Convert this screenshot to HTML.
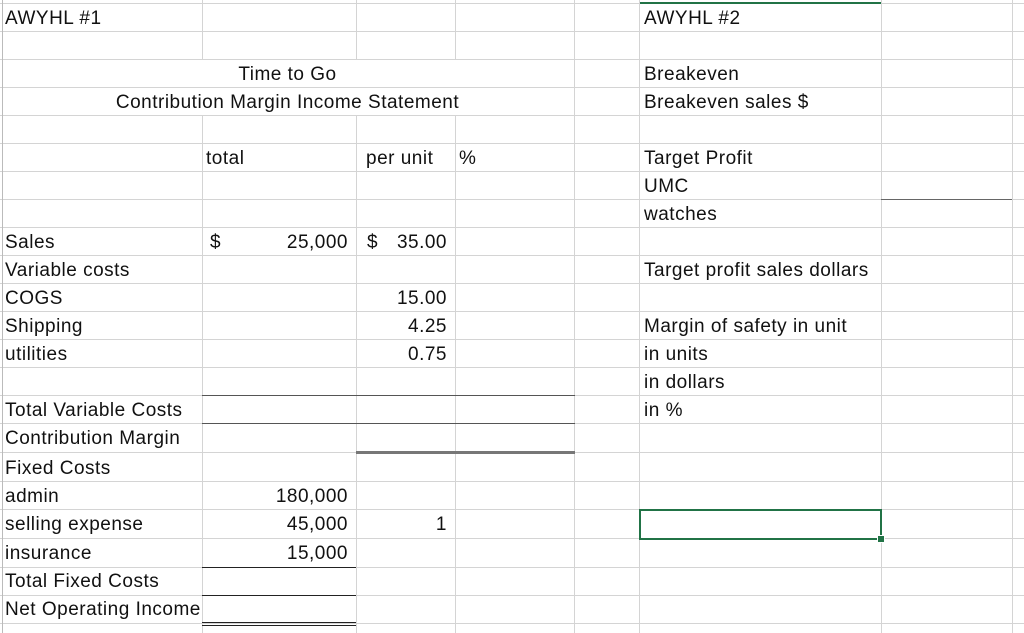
<!DOCTYPE html>
<html><head><meta charset="utf-8"><style>
body{margin:0;width:1024px;height:633px;overflow:hidden;background:#fff;position:relative;font-family:"Liberation Sans",Arial,sans-serif;}
.h{position:absolute;height:1px;background:#d4d4d4;left:0;width:1024px}
.v{position:absolute;width:1px;background:#d4d4d4}
.b{position:absolute;height:1px;background:#222}
.t{position:absolute;font-size:19px;line-height:30px;height:28px;white-space:nowrap;color:#111;letter-spacing:0.5px}
.r{text-align:right}
</style></head><body>
<div class="h" style="top:3px"></div><div class="h" style="top:31px"></div><div class="h" style="top:59px"></div><div class="h" style="top:87px"></div><div class="h" style="top:115px"></div><div class="h" style="top:143px"></div><div class="h" style="top:171px"></div><div class="h" style="top:199px"></div><div class="h" style="top:227px"></div><div class="h" style="top:255px"></div><div class="h" style="top:283px"></div><div class="h" style="top:311px"></div><div class="h" style="top:339px"></div><div class="h" style="top:367px"></div><div class="h" style="top:395px"></div><div class="h" style="top:423px"></div><div class="h" style="top:452px"></div><div class="h" style="top:481px"></div><div class="h" style="top:509px"></div><div class="h" style="top:538px"></div><div class="h" style="top:567px"></div><div class="h" style="top:595px"></div><div class="h" style="top:623px"></div>
<div class="v" style="left:2px;top:0;height:633px;background:#bbb"></div>
<div class="v" style="left:202px;top:0;height:59px"></div><div class="v" style="left:202px;top:115px;height:518px"></div>
<div class="v" style="left:356px;top:0;height:59px"></div><div class="v" style="left:356px;top:115px;height:518px"></div>
<div class="v" style="left:455px;top:0;height:59px"></div><div class="v" style="left:455px;top:115px;height:518px"></div>
<div class="v" style="left:574px;top:0;height:633px"></div>
<div class="v" style="left:639px;top:0;height:633px"></div>
<div class="v" style="left:881px;top:0;height:633px"></div>
<div class="v" style="left:1012px;top:0;height:633px"></div>
<div class="b" style="left:202px;width:373px;top:395px;background:#555"></div>
<div class="b" style="left:202px;width:373px;top:423px;background:#555"></div>
<div class="b" style="left:356px;width:219px;top:451px;height:3px;background:#777"></div>
<div class="b" style="left:202px;width:154px;top:567px"></div>
<div class="b" style="left:202px;width:154px;top:595px"></div>
<div class="b" style="left:202px;width:154px;top:622px"></div>
<div class="b" style="left:202px;width:154px;top:625px"></div>
<div class="b" style="left:881px;width:131px;top:199px;background:#666"></div>
<div class="b" style="left:640px;width:241px;top:2px;height:2px;background:#217346"></div>
<div style="position:absolute;left:639px;top:509px;width:239px;height:27px;border:2px solid #217346"></div>
<div style="position:absolute;left:877px;top:535px;width:6px;height:6px;background:#217346;border:1px solid #fff"></div>
<div class="t" style="left:5px;top:4px">AWYHL #1</div>
<div class="t" style="left:644px;top:4px">AWYHL #2</div>
<div class="t" style="left:0;width:575px;text-align:center;top:60px">Time to Go</div>
<div class="t" style="left:0;width:575px;text-align:center;top:88px">Contribution Margin Income Statement</div>
<div class="t" style="left:644px;top:60px">Breakeven</div>
<div class="t" style="left:644px;top:88px">Breakeven sales $</div>
<div class="t" style="left:206px;top:144px">total</div>
<div class="t" style="left:366px;top:144px">per unit</div>
<div class="t" style="left:459px;top:144px">%</div>
<div class="t" style="left:644px;top:144px">Target Profit</div>
<div class="t" style="left:644px;top:172px">UMC</div>
<div class="t" style="left:644px;top:200px">watches</div>
<div class="t" style="left:5px;top:228px">Sales</div>
<div class="t" style="left:210px;top:228px">$</div>
<div class="t r" style="left:202px;width:146px;top:228px">25,000</div>
<div class="t" style="left:367px;top:228px">$</div>
<div class="t r" style="left:356px;width:91px;top:228px">35.00</div>
<div class="t" style="left:5px;top:256px">Variable costs</div>
<div class="t" style="left:644px;top:256px">Target profit sales dollars</div>
<div class="t" style="left:5px;top:284px">COGS</div>
<div class="t r" style="left:356px;width:91px;top:284px">15.00</div>
<div class="t" style="left:5px;top:312px">Shipping</div>
<div class="t r" style="left:356px;width:91px;top:312px">4.25</div>
<div class="t" style="left:644px;top:312px">Margin of safety in unit</div>
<div class="t" style="left:5px;top:340px">utilities</div>
<div class="t r" style="left:356px;width:91px;top:340px">0.75</div>
<div class="t" style="left:644px;top:340px">in units</div>
<div class="t" style="left:644px;top:368px">in dollars</div>
<div class="t" style="left:5px;top:396px">Total Variable Costs</div>
<div class="t" style="left:644px;top:396px">in %</div>
<div class="t" style="left:5px;top:424px">Contribution Margin</div>
<div class="t" style="left:5px;top:454px">Fixed Costs</div>
<div class="t" style="left:5px;top:482px">admin</div>
<div class="t r" style="left:202px;width:146px;top:482px">180,000</div>
<div class="t" style="left:5px;top:510px">selling expense</div>
<div class="t r" style="left:202px;width:146px;top:510px">45,000</div>
<div class="t r" style="left:356px;width:91px;top:510px">1</div>
<div class="t" style="left:5px;top:539px">insurance</div>
<div class="t r" style="left:202px;width:146px;top:539px">15,000</div>
<div class="t" style="left:5px;top:567px">Total Fixed Costs</div>
<div class="t" style="left:5px;top:595px">Net Operating Income</div>
</body></html>
